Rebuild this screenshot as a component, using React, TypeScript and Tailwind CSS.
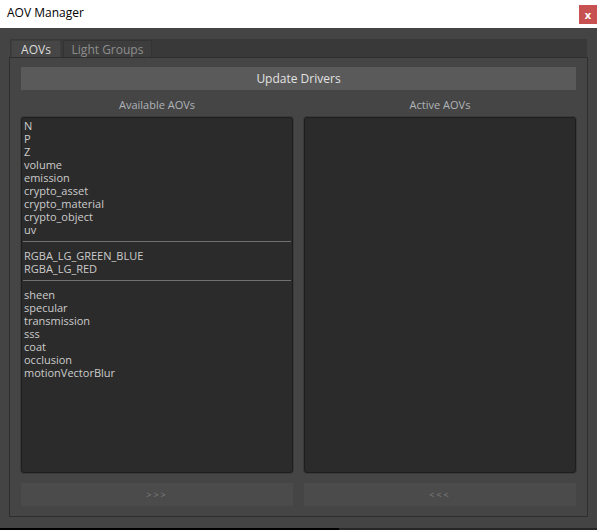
import React, { useState } from 'react';

const availableGroups: string[][] = [
  ['N', 'P', 'Z', 'volume', 'emission', 'crypto_asset', 'crypto_material', 'crypto_object', 'uv'],
  ['RGBA_LG_GREEN_BLUE', 'RGBA_LG_RED'],
  ['sheen', 'specular', 'transmission', 'sss', 'coat', 'occlusion', 'motionVectorBlur'],
];

const App = () => {
  const [tab, setTab] = useState<'aovs' | 'lights'>('aovs');

  return (
    <div
      className="w-[597px] h-[530px] bg-[#444444] flex flex-col overflow-hidden"
      style={{ fontFamily: '"Open Sans", "Liberation Sans", sans-serif' }}
    >
      {/* window title */}
      <div className="h-[28px] bg-white flex justify-between shrink-0">
        <span className="pl-[7px] pt-[5px] text-[12px] text-black leading-[16px]">AOV Manager</span>
        <button className="mt-[5px] w-[18px] h-[19px] bg-[#c75050] text-white text-[11px] font-bold leading-none flex items-center justify-center">
          x
        </button>
      </div>

      <div className="px-[9px] pt-[11px]">
        {/* tabs */}
        <div className="mx-[1px] h-[18px] bg-[#393939] flex items-end gap-[2px] pl-[1px]">
          <button
            onClick={() => setTab('aovs')}
            className={`h-[17px] w-[50px] pt-[1px] rounded-t-[2px] border border-b-0 text-[12px] leading-none ${
              tab === 'aovs' ? 'bg-[#464646] border-[#3e3e3e] text-[#dcdcdc]' : 'bg-[#3d3d3d] border-[#333] text-[#8e8e8e]'
            }`}
          >
            AOVs
          </button>
          <button
            onClick={() => setTab('lights')}
            className={`h-[17px] w-[89px] pt-[1px] rounded-t-[2px] border border-b-0 text-[12px] leading-none ${
              tab === 'lights' ? 'bg-[#464646] border-[#3e3e3e] text-[#dcdcdc]' : 'bg-[#3d3d3d] border-[#333] text-[#8e8e8e]'
            }`}
          >
            Light Groups
          </button>
        </div>

        {/* pane */}
        <div className="h-[460px] border border-[#2e2e2e] bg-[#454545] px-[11px] pt-[9px] pb-[10px] flex flex-col">
          <button className="h-[23px] w-full bg-[#5a5a5a] text-[#e2e2e2] text-[12px] shrink-0">
            Update Drivers
          </button>

          <div className="grid grid-cols-2 gap-x-[11px] h-[27px] shrink-0 pt-[3px]">
            <div className="flex items-center justify-center text-[11px] text-[#b0b4b8]">Available AOVs</div>
            <div className="flex items-center justify-center text-[11px] text-[#b0b4b8]">Active AOVs</div>
          </div>

          <div className="grid grid-cols-2 gap-x-[11px] h-[356px] shrink-0">
            <div className="bg-[#2b2b2b] border border-[#1e1e1e] rounded-[3px] shadow-[0_0_0_1px_#3a3a3a] pt-[1px] px-[1px] overflow-hidden">
              {availableGroups.map((group, gi) => (
                <div key={gi}>
                  {gi > 0 && (
                    <div className="pt-[5px] pb-[7px]">
                      <div className="border-t border-[#707070]" />
                    </div>
                  )}
                  {group.map((name) => (
                    <div key={name} className="pl-[1px] text-[11px] leading-[13px] text-[#cccccc] whitespace-nowrap">
                      {name}
                    </div>
                  ))}
                </div>
              ))}
            </div>
            <div className="bg-[#2b2b2b] border border-[#1e1e1e] rounded-[3px] shadow-[0_0_0_1px_#3a3a3a]" />
          </div>

          <div className="grid grid-cols-2 gap-x-[11px] mt-[10px] h-[23px] shrink-0">
            <button className="bg-[#4b4b4b] text-[#7e7e7e] text-[9px] tracking-[2px]">{'>>>'}</button>
            <button className="bg-[#4b4b4b] text-[#7e7e7e] text-[9px] tracking-[2px]">{'<<<'}</button>
          </div>
        </div>
      </div>

      {/* bottom edge of the capture */}
      <div className="mt-auto h-[2px] flex shrink-0">
        <div className="w-[339px] bg-black" />
        <div className="flex-1 bg-[#262626]" />
      </div>
    </div>
  );
};

export default App;
